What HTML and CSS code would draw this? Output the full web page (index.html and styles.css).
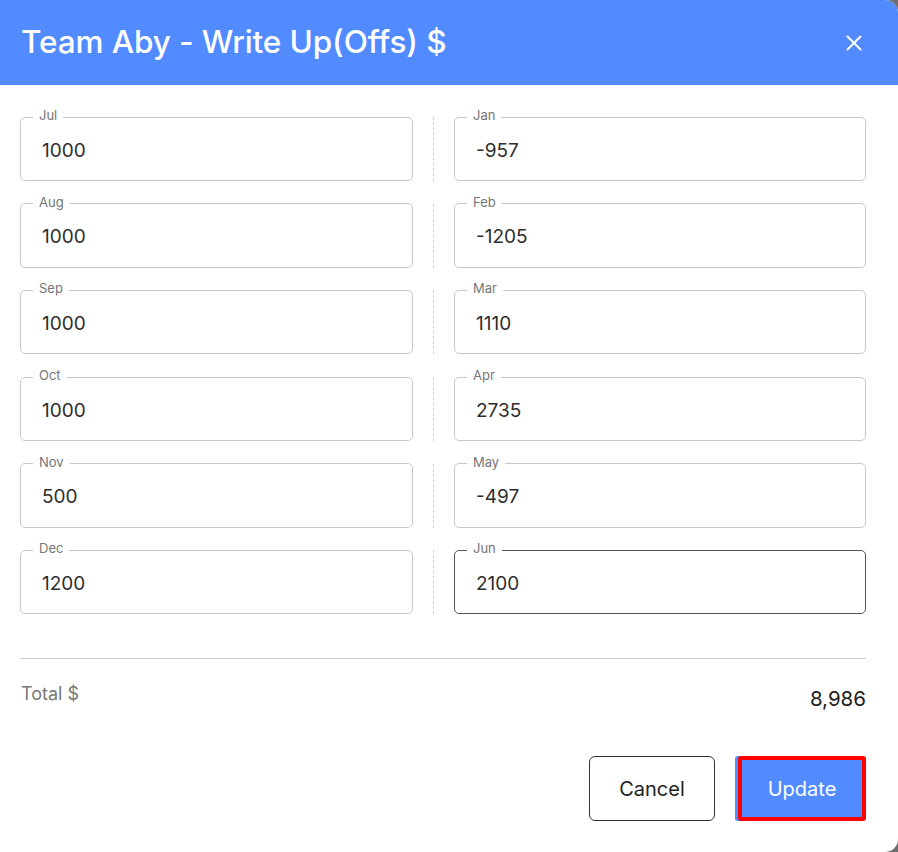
FILE: index.html
```html
<!DOCTYPE html>
<html lang="en">
<head>
    <meta charset="UTF-8">
    <meta name="viewport" content="width=device-width, initial-scale=1.0">
    <title>Team Aby - Write Up(Offs) $</title>
    <link rel="stylesheet" href="styles.css">
</head>
<body>
    <div class="modal">
        <header class="modal-header">
            <span class="modal-title">Team Aby - Write Up(Offs) $</span>
            <button class="close-btn" aria-label="Close">
                <svg width="16" height="16" viewBox="0 0 16 16">
                    <path d="M1.5 1.5 L14.5 14.5 M14.5 1.5 L1.5 14.5" stroke="#fff" stroke-width="2" stroke-linecap="round"/>
                </svg>
            </button>
        </header>

        <div class="modal-body">
            <div class="months">
                <fieldset class="field"><legend>Jul</legend><input value="1000"></fieldset>
                <div class="divider"></div>
                <fieldset class="field"><legend>Jan</legend><input value="-957"></fieldset>

                <fieldset class="field"><legend>Aug</legend><input value="1000"></fieldset>
                <div class="divider"></div>
                <fieldset class="field"><legend>Feb</legend><input value="-1205"></fieldset>

                <fieldset class="field"><legend>Sep</legend><input value="1000"></fieldset>
                <div class="divider"></div>
                <fieldset class="field"><legend>Mar</legend><input value="1110"></fieldset>

                <fieldset class="field"><legend>Oct</legend><input value="1000"></fieldset>
                <div class="divider"></div>
                <fieldset class="field"><legend>Apr</legend><input value="2735"></fieldset>

                <fieldset class="field"><legend>Nov</legend><input value="500"></fieldset>
                <div class="divider"></div>
                <fieldset class="field"><legend>May</legend><input value="-497"></fieldset>

                <fieldset class="field"><legend>Dec</legend><input value="1200"></fieldset>
                <div class="divider"></div>
                <fieldset class="field active"><legend>Jun</legend><input value="2100"></fieldset>
            </div>

            <div class="total-row">
                <span class="total-label">Total $</span>
                <span class="total-value">8,986</span>
            </div>

            <div class="actions">
                <button class="btn btn-cancel">Cancel</button>
                <button class="btn btn-update">Update</button>
            </div>
        </div>
    </div>
</body>
</html>
```

FILE: styles.css
```css
body {
    margin: 0;
    padding: 0;
    background-color: #6f6f6f;
    font-family: Inter, "Noto Sans", sans-serif;
}
.modal {
    width: 898px;
    height: 852px;
    background: #fff;
    border-radius: 0 13px 13px 0;
    overflow: hidden;
}
.modal-header {
    display: flex;
    justify-content: space-between;
    align-items: center;
    height: 85px;
    padding: 0 36px 0 21px;
    background-color: #528bff;
    box-sizing: border-box;
}
.modal-title {
    color: #fff;
    font-size: 31.5px;
    font-weight: 500;
    letter-spacing: -0.1px;
    margin-top: -2px;
}
.close-btn {
    background: none;
    border: none;
    padding: 0;
    width: 16px;
    height: 16px;
    margin-top: 1px;
    cursor: pointer;
}
.close-btn svg {
    display: block;
}
.modal-body {
    padding: 24px 32px 0 20px;
}
.months {
    display: grid;
    grid-template-columns: 393px 41px 1fr;
    row-gap: 14.7px;
}
.field {
    margin: 0;
    padding: 0 12px 3px;
    min-width: 0;
    border: 1px solid #c9c9c9;
    border-radius: 5px;
    height: 72px;
    box-sizing: border-box;
}
.field legend {
    padding: 0 6px 4px;
    font-size: 13px;
    line-height: 12px;
    color: #767676;
}
.field input {
    display: block;
    width: 100%;
    height: 50px;
    border: none;
    outline: none;
    padding: 0 0 0 9px;
    box-sizing: border-box;
    font-family: inherit;
    font-size: 19px;
    color: #2e2e2e;
    background: transparent;
}
.field.active {
    border-color: #555;
}
.divider {
    margin: 8px auto 0;
    width: 0;
    height: 64px;
    border-left: 1px dashed #cfcfcf;
}
.total-row {
    display: flex;
    justify-content: space-between;
    align-items: flex-start;
    margin-top: 44px;
    padding-top: 24px;
    border-top: 1px solid #cdcdcd;
}
.total-label {
    font-size: 18px;
    color: #777;
    padding-left: 1px;
}
.total-value {
    font-size: 20.5px;
    color: #222;
    margin-top: 3px;
}
.actions {
    display: flex;
    justify-content: flex-end;
    gap: 23px;
    margin-top: 45px;
}
.btn {
    height: 65px;
    font-family: inherit;
    font-size: 20px;
    border-radius: 6px;
    cursor: pointer;
}
.btn-cancel {
    width: 126px;
    background: #fff;
    color: #222;
    border: 1px solid #333;
}
.btn-update {
    width: 128px;
    background: #528bff;
    color: #fff;
    border: 4px solid #ff0000;
    border-radius: 3px;
    box-shadow: -3px 0 0 0 #528bff;
}
```
